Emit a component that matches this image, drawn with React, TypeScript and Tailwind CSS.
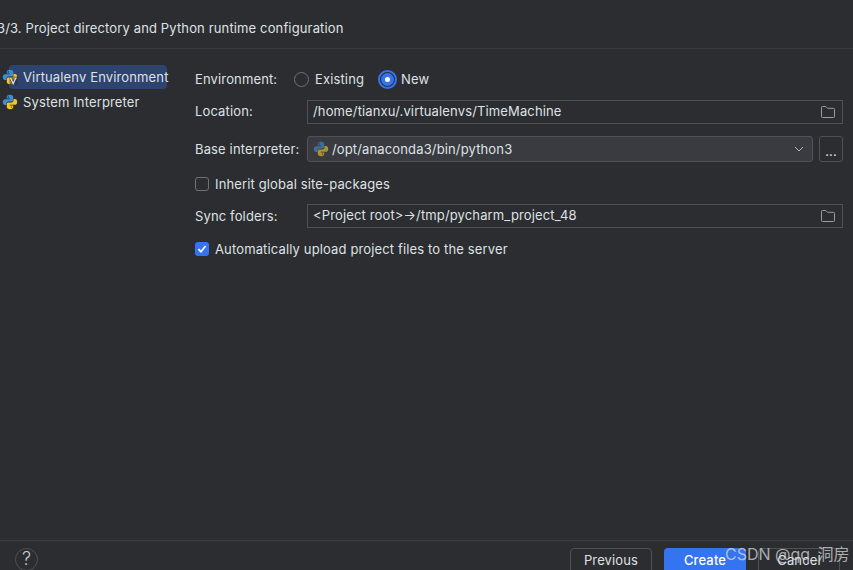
import React from "react";

const BLUE = "M8 .8C5.4.8 4.7 1.900 4.700 3.100v1.500h3.500v.6H3.100C1.700 5.200.8 6.300.8 8.100s.9 3 2.300 3h1.400V9.500c0-1.100.9-2 2-2h3.100c.9 0 1.600-.7 1.600-1.600V3.100C11.200 1.900 10.300.8 8 .8z";

function PythonIcon({ dim = false, venv = false }: { dim?: boolean; venv?: boolean }) {
  return (
    <svg width="16" height="16" viewBox="0 0 16 16" className="shrink-0">
      <g opacity={dim ? 0.62 : 1}>
        <path d={BLUE} fill="#3d8fd1" />
        <path d={BLUE} fill="#f4c430" transform="rotate(180 8 8)" />
        <circle cx="6.300" cy="2.900" r=".7" fill="#2b2d30" />
        <circle cx="9.700" cy="13.100" r=".7" fill="#2b2d30" />
      </g>
      {venv && (
        <g>
          <rect x="7.500" y="7.500" width="8.500" height="8.500" fill="#2b2d30" opacity=".5" />
          <path d="M8.500 8.800l2.700 6 2.700-6" fill="none" stroke="#dfe1e5" strokeWidth="1.200" />
        </g>
      )}
    </svg>
  );
}

function FolderIcon() {
  return (
    <svg width="16" height="16" viewBox="0 0 16 16" fill="none" className="shrink-0">
      <path d="M1.500 3.500a1 1 0 0 1 1-1h3.300l1.700 1.800h6a1 1 0 0 1 1 1v7.200a1 1 0 0 1-1 1h-11a1 1 0 0 1-1-1z" stroke="#9a9da3" />
    </svg>
  );
}

function PathField({ children }: { children: React.ReactNode }) {
  return (
    <div className="flex h-6 flex-1 items-center justify-between border border-[#4e5157] pl-[5px] pr-[6px] text-[#dfe1e5]">
      <span className="pb-[2px]">{children}</span>
      <FolderIcon />
    </div>
  );
}

function Label({ children, lift = false }: { children: React.ReactNode; lift?: boolean }) {
  return (
    <span className={lift ? "w-[112px] shrink-0 pb-[2px] text-[#dfe1e5]" : "w-[112px] shrink-0 pb-px text-[#dfe1e5]"}>
      {children}
    </span>
  );
}

function FooterButton({ children, primary = false }: { children: React.ReactNode; primary?: boolean }) {
  return (
    <div
      className={
        primary
          ? "flex h-7 w-[82px] items-center justify-center rounded-[4px] bg-[#3574f0] pb-[5px] font-medium text-white"
          : "flex h-7 w-[82px] items-center justify-center rounded-[4px] border border-[#4e5157] pb-[5px] text-[#dfe1e5]"
      }
    >
      {children}
    </div>
  );
}

export default function App() {
  return (
    <div
      className="relative flex h-[570px] w-[853px] flex-col overflow-hidden bg-[#2b2d30] text-[13px] leading-4 tracking-[0.14px]"
      style={{ fontFamily: "Inter, 'Noto Sans CJK SC', sans-serif" }}
    >
      <header className="flex h-[49px] shrink-0 items-center border-b border-[#393b40] pt-[8px]">
        <span className="-ml-[3px] whitespace-nowrap text-[#dfe1e5]">3/3. Project directory and Python runtime configuration</span>
      </header>

      <main className="flex flex-1">
        <aside className="w-[195px] shrink-0 pt-4 text-[#dfe1e5]">
          <div className="relative flex h-6 items-center">
            <div className="ml-[9px] h-6 w-[158px] rounded-[4px] bg-[#2e436e]" />
            <div className="absolute left-[2px] top-[4px] flex items-center gap-[5px] whitespace-nowrap">
              <PythonIcon venv />
              <span>Virtualenv Environment</span>
            </div>
          </div>
          <div className="mt-[1px] flex h-6 items-center gap-[5px] pl-[2px]">
            <PythonIcon />
            <span>System Interpreter</span>
          </div>
        </aside>

        <section className="flex flex-1 flex-col pr-[10px] pt-[22px]">
          <div className="flex h-4 items-center">
            <span className="w-[99px] shrink-0 text-[#dfe1e5]">Environment:</span>
            <div className="flex items-center gap-[6px]">
              <span className="h-[15px] w-[15px] rounded-full border border-[#6f7278]" />
              <span className="text-[#dfe1e5]">Existing</span>
            </div>
            <div className="ml-[14px] flex items-center gap-[4px]">
              <span className="flex h-[19px] w-[19px] items-center justify-center rounded-full border-2 border-[#3574f0] bg-[#2b2d30]">
                <span className="flex h-[13px] w-[13px] items-center justify-center rounded-full bg-[#3574f0]">
                  <span className="h-[5px] w-[5px] rounded-full bg-white" />
                </span>
              </span>
              <span className="text-[#dfe1e5]">New</span>
            </div>
          </div>

          <div className="mt-[13px] flex items-center">
            <Label lift>Location:</Label>
            <PathField>/home/tianxu/.virtualenvs/TimeMachine</PathField>
          </div>

          <div className="mt-3 flex items-center">
            <Label>Base interpreter:</Label>
            <div className="flex h-[26px] flex-1 items-center rounded-[3px] border border-[#4e5157] bg-[#393b40] pl-[5px] pr-[8px] text-[#dfe1e5]">
              <PythonIcon dim />
              <span className="ml-[3px] flex-1">/opt/anaconda3/bin/python3</span>
              <svg width="10" height="6" viewBox="0 0 10 6" fill="none">
                <path d="M1 1l4 4 4-4" stroke="#b4b8bf" />
              </svg>
            </div>
            <div className="ml-[6px] flex h-[26px] w-6 items-center justify-center rounded-[3px] border border-[#4e5157] pt-[4px] text-[#dfe1e5]">
              ...
            </div>
          </div>

          <div className="mt-[14px] flex h-4 items-center gap-[6px]">
            <span className="h-[14px] w-[14px] rounded-[3px] border border-[#6f7278]" />
            <span className="text-[#dfe1e5]">Inherit global site-packages</span>
          </div>

          <div className="mt-3 flex items-center">
            <Label>Sync folders:</Label>
            <PathField>{"<Project root>\u2192/tmp/pycharm_project_48"}</PathField>
          </div>

          <div className="mt-[13px] flex h-4 items-center gap-[6px]">
            <span className="flex h-[14px] w-[14px] items-center justify-center rounded-[3px] bg-[#3574f0]">
              <svg width="10" height="10" viewBox="0 0 10 10" fill="none">
                <path d="M1.500 5.200l2.400 2.600 4.700-5.800" stroke="#fff" strokeWidth="1.700" />
              </svg>
            </span>
            <span className="text-[#dfe1e5]">Automatically upload project files to the server</span>
          </div>
        </section>
      </main>

      <footer className="flex h-[30px] shrink-0 items-start border-t border-[#393b40] pl-[15px] pt-[7px]">
        <div className="flex h-[23px] w-[23px] items-center justify-center rounded-full border border-[#4e5157] pb-px text-[18px] font-light text-[#c9ccd2]">
          ?
        </div>
        <div className="ml-auto flex gap-3 pr-[13px]">
          <FooterButton>Previous</FooterButton>
          <FooterButton primary>Create</FooterButton>
          <FooterButton>Cancel</FooterButton>
        </div>
      </footer>

      <span className="absolute left-[725px] top-[544px] whitespace-nowrap text-[16px] leading-5 tracking-normal text-[#d8d8d8]/75">
        CSDN @qq_洞房
      </span>
    </div>
  );
}
